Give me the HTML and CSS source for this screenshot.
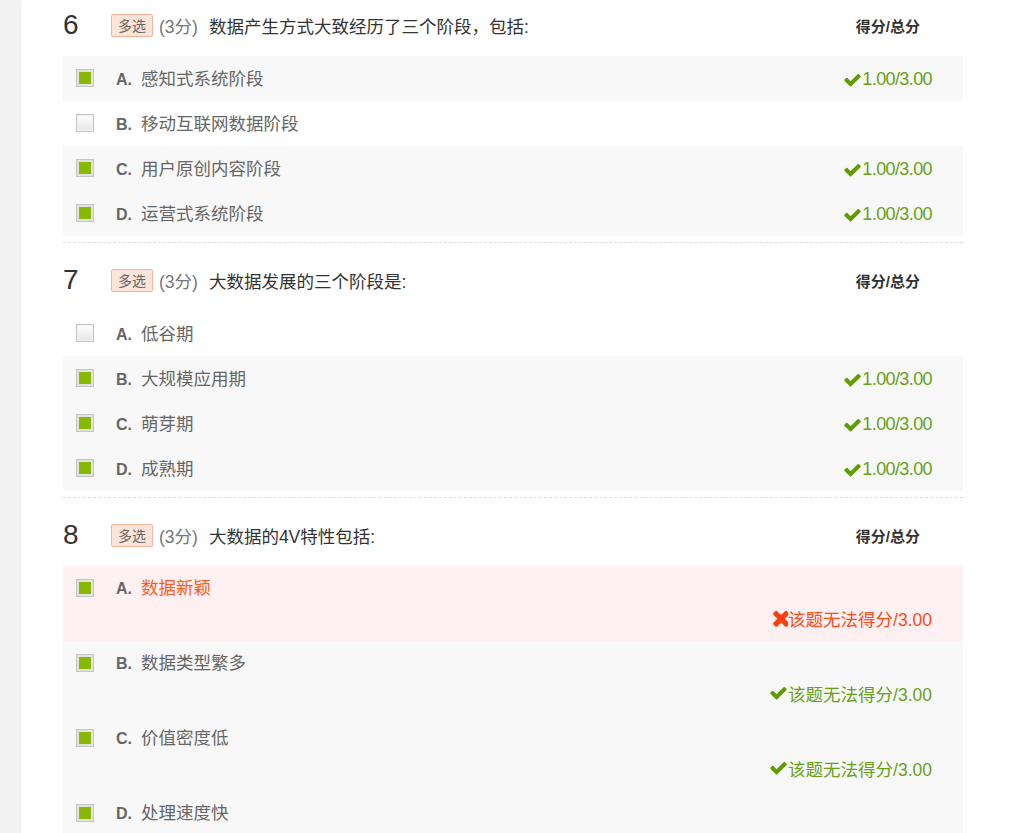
FILE: index.html
```html
<!DOCTYPE html>
<html lang="zh-CN">
<head>
<meta charset="utf-8">
<title>作业</title>
<link rel="stylesheet" href="styles.css">
</head>
<body>
<div class="page">
  <div class="side"></div>
  <main class="main">
    <section class="question first">
      <div class="q-head">
        <span class="q-num">6</span>
        <span class="q-tag">多选</span>
        <span class="q-score">(3分)</span>
        <span class="q-title">数据产生方式大致经历了三个阶段，包括:</span>
        <span class="q-total">得分/总分</span>
      </div>
      <div class="options">
        <div class="opt shade"><span class="cb on"></span><span class="lbl"><b class="letter">A.</b>感知式系统阶段</span><span class="score ok"><svg class="ico" viewBox="0 300 1792 1300"><path d="M1671 566q0 40-28 68l-724 724-136 136q-28 28-68 28t-68-28l-136-136-362-362q-28-28-28-68t28-68l136-136q28-28 68-28t68 28l294 295 656-657q28-28 68-28t68 28l136 136q28 28 28 68z"/></svg><span class="num">1.00/3.00</span></span></div>
        <div class="opt"><span class="cb"></span><span class="lbl"><b class="letter">B.</b>移动互联网数据阶段</span></div>
        <div class="opt shade"><span class="cb on"></span><span class="lbl"><b class="letter">C.</b>用户原创内容阶段</span><span class="score ok"><svg class="ico" viewBox="0 300 1792 1300"><path d="M1671 566q0 40-28 68l-724 724-136 136q-28 28-68 28t-68-28l-136-136-362-362q-28-28-28-68t28-68l136-136q28-28 68-28t68 28l294 295 656-657q28-28 68-28t68 28l136 136q28 28 28 68z"/></svg><span class="num">1.00/3.00</span></span></div>
        <div class="opt shade"><span class="cb on"></span><span class="lbl"><b class="letter">D.</b>运营式系统阶段</span><span class="score ok"><svg class="ico" viewBox="0 300 1792 1300"><path d="M1671 566q0 40-28 68l-724 724-136 136q-28 28-68 28t-68-28l-136-136-362-362q-28-28-28-68t28-68l136-136q28-28 68-28t68 28l294 295 656-657q28-28 68-28t68 28l136 136q28 28 28 68z"/></svg><span class="num">1.00/3.00</span></span></div>
      </div>
    </section>

    <section class="question">
      <div class="q-head">
        <span class="q-num">7</span>
        <span class="q-tag">多选</span>
        <span class="q-score">(3分)</span>
        <span class="q-title">大数据发展的三个阶段是:</span>
        <span class="q-total">得分/总分</span>
      </div>
      <div class="options">
        <div class="opt"><span class="cb"></span><span class="lbl"><b class="letter">A.</b>低谷期</span></div>
        <div class="opt shade"><span class="cb on"></span><span class="lbl"><b class="letter">B.</b>大规模应用期</span><span class="score ok"><svg class="ico" viewBox="0 300 1792 1300"><path d="M1671 566q0 40-28 68l-724 724-136 136q-28 28-68 28t-68-28l-136-136-362-362q-28-28-28-68t28-68l136-136q28-28 68-28t68 28l294 295 656-657q28-28 68-28t68 28l136 136q28 28 28 68z"/></svg><span class="num">1.00/3.00</span></span></div>
        <div class="opt shade"><span class="cb on"></span><span class="lbl"><b class="letter">C.</b>萌芽期</span><span class="score ok"><svg class="ico" viewBox="0 300 1792 1300"><path d="M1671 566q0 40-28 68l-724 724-136 136q-28 28-68 28t-68-28l-136-136-362-362q-28-28-28-68t28-68l136-136q28-28 68-28t68 28l294 295 656-657q28-28 68-28t68 28l136 136q28 28 28 68z"/></svg><span class="num">1.00/3.00</span></span></div>
        <div class="opt shade"><span class="cb on"></span><span class="lbl"><b class="letter">D.</b>成熟期</span><span class="score ok"><svg class="ico" viewBox="0 300 1792 1300"><path d="M1671 566q0 40-28 68l-724 724-136 136q-28 28-68 28t-68-28l-136-136-362-362q-28-28-28-68t28-68l136-136q28-28 68-28t68 28l294 295 656-657q28-28 68-28t68 28l136 136q28 28 28 68z"/></svg><span class="num">1.00/3.00</span></span></div>
      </div>
    </section>

    <section class="question">
      <div class="q-head">
        <span class="q-num">8</span>
        <span class="q-tag">多选</span>
        <span class="q-score">(3分)</span>
        <span class="q-title">大数据的4V特性包括:</span>
        <span class="q-total">得分/总分</span>
      </div>
      <div class="options">
        <div class="opt2 wrong">
          <div class="opt-line"><span class="cb on"></span><span class="lbl"><b class="letter">A.</b><span class="red">数据新颖</span></span></div>
          <div class="score-line"><span class="score bad"><svg class="ico x" viewBox="0 250 1408 1380"><path d="M1490 1322q0 40-28 68l-136 136q-28 28-68 28t-68-28l-294-294-294 294q-28 28-68 28t-68-28l-136-136q-28-28-28-68t28-68l294-294-294-294q-28-28-28-68t28-68l136-136q28-28 68-28t68 28l294 294 294-294q28-28 68-28t68 28l136 136q28 28 28 68t-28 68l-294 294 294 294q28 28 28 68z"/></svg>该题无法得分/3.00</span></div>
        </div>
        <div class="opt2 shade">
          <div class="opt-line"><span class="cb on"></span><span class="lbl"><b class="letter">B.</b>数据类型繁多</span></div>
          <div class="score-line"><span class="score ok"><svg class="ico" viewBox="0 300 1792 1300"><path d="M1671 566q0 40-28 68l-724 724-136 136q-28 28-68 28t-68-28l-136-136-362-362q-28-28-28-68t28-68l136-136q28-28 68-28t68 28l294 295 656-657q28-28 68-28t68 28l136 136q28 28 28 68z"/></svg>该题无法得分/3.00</span></div>
        </div>
        <div class="opt2 shade">
          <div class="opt-line"><span class="cb on"></span><span class="lbl"><b class="letter">C.</b>价值密度低</span></div>
          <div class="score-line"><span class="score ok"><svg class="ico" viewBox="0 300 1792 1300"><path d="M1671 566q0 40-28 68l-724 724-136 136q-28 28-68 28t-68-28l-136-136-362-362q-28-28-28-68t28-68l136-136q28-28 68-28t68 28l294 295 656-657q28-28 68-28t68 28l136 136q28 28 28 68z"/></svg>该题无法得分/3.00</span></div>
        </div>
        <div class="opt2 shade">
          <div class="opt-line"><span class="cb on"></span><span class="lbl"><b class="letter">D.</b>处理速度快</span></div>
        </div>
      </div>
    </section>
  </main>
</div>
</body>
</html>
```

FILE: styles.css
```css
* { box-sizing: border-box; }
html, body {
  margin: 0;
  padding: 0;
  background: #fff;
  height: 833px;
  overflow: hidden;
}
body {
  font-family: "Liberation Sans", "Noto Sans CJK SC", sans-serif;
  color: #666;
}
.page {
  display: flex;
  min-height: 833px;
}
.side {
  width: 20px;
  flex: none;
  background: #f2f2f2;
  box-shadow: 1px 0 2px rgba(0,0,0,0.08);
}
.main {
  padding-left: 43px;
  width: 963px;
}
.question {
  width: 900px;
  padding-top: 23px;
  padding-bottom: 6px;
  border-bottom: 1px dashed #dcdcdc;
}
.question.first { padding-top: 11px; }
.question:last-child { border-bottom: none; }

.q-head {
  display: flex;
  align-items: center;
  height: 30px;
  padding-bottom: 2px;
  margin-bottom: 15px;
}
.q-num {
  width: 48px;
  font-size: 28px;
  color: #333;
  line-height: 30px;
  flex: none;
}
.q-tag {
  flex: none;
  height: 23px;
  line-height: 21px;
  padding: 0 6px;
  font-size: 14px;
  color: #666;
  background: #fde4da;
  border: 1px solid #f7b49a;
  border-radius: 2px;
  font-family: "Noto Sans CJK SC", sans-serif;
}
.q-score {
  margin-left: 6px;
  font-size: 17.5px;
  color: #777;
}
.q-title {
  margin-left: 11px;
  font-size: 17.5px;
  color: #333;
}
.q-total {
  margin-left: auto;
  margin-right: 43px;
  font-size: 15px;
  font-weight: bold;
  color: #333;
}

.opt {
  display: flex;
  align-items: center;
  height: 45px;
  padding-bottom: 3px;
}
.opt .score { padding-top: 5px; }
.shade { background: #f8f8f8; }
.wrong { background: #fff1f1; }

.cb {
  flex: none;
  width: 18px;
  height: 18px;
  margin-left: 13px;
  margin-top: 2px;
  border: 1px solid #c4c4c4;
  background: linear-gradient(#ffffff, #e4e4e4);
  box-shadow: inset 0 0 0 1px #f4f4f4;
}
.cb.on {
  background: #88b800;
  box-shadow: inset 0 0 0 2px #e2e2e2;
}
.lbl {
  margin-left: 22px;
  font-size: 17.5px;
  color: #666;
}
.letter {
  display: inline-block;
  width: 25px;
  font-size: 16px;
  font-weight: bold;
  color: #666;
}
.red { color: #ff5a1f; }

.score {
  margin-left: auto;
  margin-right: 31px;
  font-size: 17.5px;
  display: flex;
  align-items: center;
}
.num {
  font-size: 18px;
  letter-spacing: -0.6px;
}
.score.ok { color: #66a119; }
.score.bad { color: #ff4a1a; }
.ico {
  width: 19px;
  height: 15px;
  fill: #5f9c00;
  margin-top: 1px;
}
.ico.x {
  width: 19px;
  height: 19px;
  fill: #ff3c10;
}

.opt2 {
  height: 75px;
  display: flex;
  flex-direction: column;
}
.opt-line {
  display: flex;
  align-items: center;
  height: 44px;
  padding-bottom: 3px;
}
.score-line {
  display: flex;
  align-items: center;
  height: 30px;
  margin-top: -6px;
  padding-bottom: 2px;
}
```
